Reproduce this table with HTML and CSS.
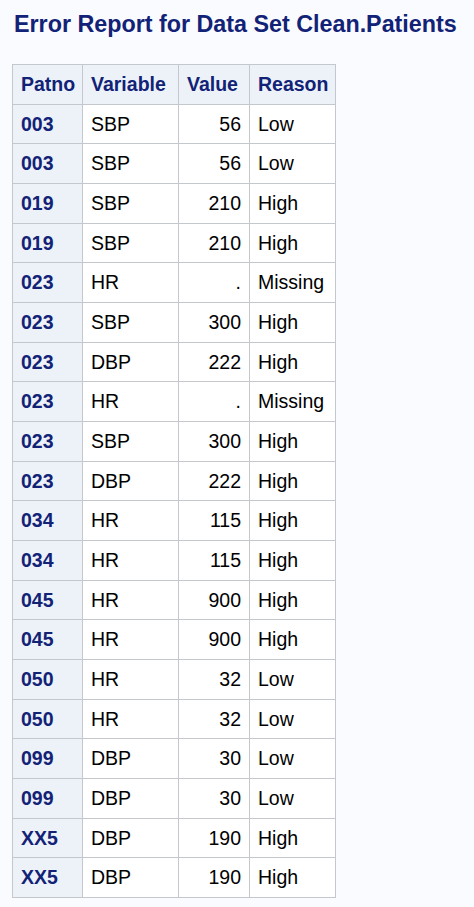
FILE: index.html
```html
<!DOCTYPE html>
<html>
<head>
<meta charset="utf-8">
<link rel="stylesheet" href="styles.css">
</head>
<body>
<div class="page">
  <h1 class="title">Error Report for Data Set Clean.Patients</h1>
  <table class="report">
    <colgroup>
      <col class="c1"><col class="c2"><col class="c3"><col class="c4">
    </colgroup>
    <thead>
      <tr><th>Patno</th><th>Variable</th><th>Value</th><th>Reason</th></tr>
    </thead>
    <tbody>
      <tr><th>003</th><td>SBP</td><td class="num">56</td><td>Low</td></tr>
      <tr><th>003</th><td>SBP</td><td class="num">56</td><td>Low</td></tr>
      <tr><th>019</th><td>SBP</td><td class="num">210</td><td>High</td></tr>
      <tr><th>019</th><td>SBP</td><td class="num">210</td><td>High</td></tr>
      <tr><th>023</th><td>HR</td><td class="num">.</td><td>Missing</td></tr>
      <tr><th>023</th><td>SBP</td><td class="num">300</td><td>High</td></tr>
      <tr><th>023</th><td>DBP</td><td class="num">222</td><td>High</td></tr>
      <tr><th>023</th><td>HR</td><td class="num">.</td><td>Missing</td></tr>
      <tr><th>023</th><td>SBP</td><td class="num">300</td><td>High</td></tr>
      <tr><th>023</th><td>DBP</td><td class="num">222</td><td>High</td></tr>
      <tr><th>034</th><td>HR</td><td class="num">115</td><td>High</td></tr>
      <tr><th>034</th><td>HR</td><td class="num">115</td><td>High</td></tr>
      <tr><th>045</th><td>HR</td><td class="num">900</td><td>High</td></tr>
      <tr><th>045</th><td>HR</td><td class="num">900</td><td>High</td></tr>
      <tr><th>050</th><td>HR</td><td class="num">32</td><td>Low</td></tr>
      <tr><th>050</th><td>HR</td><td class="num">32</td><td>Low</td></tr>
      <tr><th>099</th><td>DBP</td><td class="num">30</td><td>Low</td></tr>
      <tr><th>099</th><td>DBP</td><td class="num">30</td><td>Low</td></tr>
      <tr><th>XX5</th><td>DBP</td><td class="num">190</td><td>High</td></tr>
      <tr><th>XX5</th><td>DBP</td><td class="num">190</td><td>High</td></tr>
    </tbody>
  </table>
</div>
</body>
</html>
```
FILE: styles.css
```css
html, body {
  margin: 0;
  padding: 0;
  background: #fafbfe;
}
.page {
  padding: 9.5px 0 0 0;
  font-family: "Liberation Sans", Arial, sans-serif;
}
.title {
  margin: 0 0 0 14px;
  font-size: 23.3px;
  line-height: 28px;
  font-weight: bold;
  color: #112277;
  white-space: nowrap;
}
.report {
  margin: 26.5px 0 0 12px;
  border-collapse: collapse;
  table-layout: fixed;
  width: 323px;
  background: #ffffff;
  font-size: 19.5px;
}
.c1 { width: 70px; }
.c2 { width: 96px; }
.c3 { width: 71px; }
.c4 { width: 86px; }
.report th,
.report td {
  border: 1px solid #c4c7cb;
  padding: 0 8px;
  height: 38.67px;
  line-height: 38.67px;
  text-align: left;
  white-space: nowrap;
}
.report thead th {
  background: #edf2f9;
  color: #112277;
  font-weight: bold;
}
.report tbody th {
  background: #edf2f9;
  color: #112277;
  font-weight: bold;
}
.report td {
  color: #000000;
  font-weight: normal;
}
.report td.num {
  text-align: right;
}
```
